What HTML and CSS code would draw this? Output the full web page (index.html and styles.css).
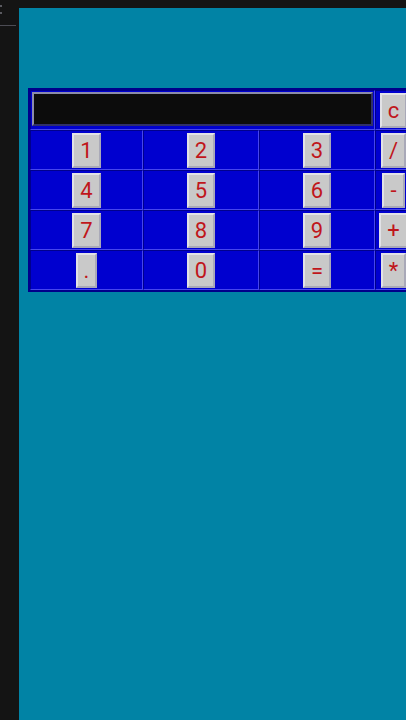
FILE: index.html
```html
<!DOCTYPE html>
<html>
<head>
<meta charset="utf-8">
<link rel="stylesheet" href="styles.css">
</head>
<body>
<div class="screen">
  <div class="gutter">
    <span class="glyph"></span>
    <span class="rule"></span>
  </div>
  <div class="frame">
    <table class="calc">
      <tr>
        <td colspan="3" class="disp"><input class="display" type="text"></td>
        <td class="c4"><button class="key">c</button></td>
      </tr>
      <tr>
        <td class="c1"><button class="key">1</button></td>
        <td class="c2"><button class="key">2</button></td>
        <td class="c3"><button class="key">3</button></td>
        <td class="c4"><button class="key">/</button></td>
      </tr>
      <tr>
        <td class="c1"><button class="key">4</button></td>
        <td class="c2"><button class="key">5</button></td>
        <td class="c3"><button class="key">6</button></td>
        <td class="c4"><button class="key">-</button></td>
      </tr>
      <tr>
        <td class="c1"><button class="key">7</button></td>
        <td class="c2"><button class="key">8</button></td>
        <td class="c3"><button class="key">9</button></td>
        <td class="c4"><button class="key">+</button></td>
      </tr>
      <tr>
        <td class="c1"><button class="key">.</button></td>
        <td class="c2"><button class="key">0</button></td>
        <td class="c3"><button class="key">=</button></td>
        <td class="c4"><button class="key">*</button></td>
      </tr>
    </table>
  </div>
</div>
</body>
</html>
```
FILE: styles.css
```css
html, body {
  margin: 0;
  padding: 0;
  overflow: hidden;
  background: #141414;
  font-family: Roboto, "Noto Sans", sans-serif;
}
.screen {
  display: flex;
  width: 406px;
  height: 720px;
  overflow: hidden;
}
.gutter {
  width: 19px;
  flex: none;
  display: flex;
  flex-direction: column;
}
.glyph {
  display: block;
  width: 2px;
  height: 9px;
  margin-top: 5px;
  border-top: 2px solid #5a5a60;
  border-bottom: 2px solid #5a5a60;
  box-sizing: border-box;
}
.rule {
  display: block;
  width: 16px;
  margin-top: 11px;
  border-top: 1px solid #4c4c54;
}
.frame {
  flex: 1;
  min-width: 0;
  margin-top: 8px;
  height: 712px;
  background: #0183a5;
  padding: 80px 0 0 9px;
  box-sizing: border-box;
  overflow: hidden;
}
.calc {
  width: max-content;
  border-collapse: separate;
  border-spacing: 0;
  border: 2px solid #00008a;
  background: #0000cc;
}
.calc td {
  background: #0000cf;
  border: 1px solid;
  border-color: #00008c #4646ee #4646ee #00008c;
  padding: 2px 0 1px;
  text-align: center;
  vertical-align: middle;
}
.calc td.disp {
  padding: 1px 1px 3px 1px;
}
.c1 { width: 111px; }
.c2 { width: 114px; }
.c3 { width: 114px; }
.c4 { width: 35px; }
.display {
  display: block;
  width: 100%;
  height: 34px;
  box-sizing: border-box;
  margin: 0;
  background: #0c0c0c;
  border: 2px solid;
  border-color: #8c8caa #30306a #30306a #8c8caa;
  color: #ffffff;
  font-size: 20px;
}
.key {
  height: 35px;
  box-sizing: border-box;
  margin: 0;
  padding: 0 6px;
  background: #c9c9c9;
  border: 2px solid;
  border-color: #e2e2e6 #a9a9b8 #a9a9b8 #e2e2e6;
  color: #c0161b;
  font-family: Roboto, "Noto Sans", sans-serif;
  font-size: 22px;
  line-height: 26px;
  vertical-align: middle;
}
```
